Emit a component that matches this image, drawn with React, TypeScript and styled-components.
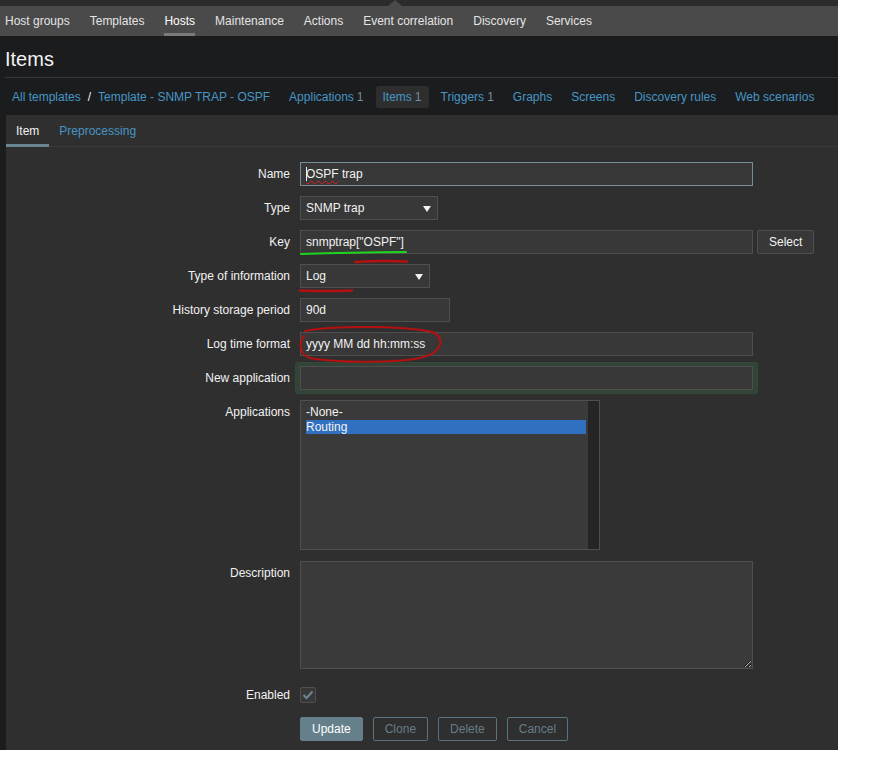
import React from 'react';
import styled, { createGlobalStyle, css } from 'styled-components';

const GlobalStyle = createGlobalStyle`
  html, body {
    margin: 0;
    padding: 0;
    background: #ffffff;
  }
  * {
    box-sizing: border-box;
  }
`;

const Page = styled.div`
  position: relative;
  width: 838px;
  height: 750px;
  background: #1b1c1e;
  font-family: 'Liberation Sans', Arial, sans-serif;
  font-size: 12px;
  color: #f2f2f2;
  display: flex;
  flex-direction: column;
  overflow: hidden;
`;

const TopStrip = styled.div`
  position: relative;
  height: 6px;
  background: #2b2b2b;

  &::after {
    content: '';
    position: absolute;
    left: 388px;
    bottom: 0;
    border-left: 7px solid transparent;
    border-right: 7px solid transparent;
    border-bottom: 6px solid #4a4a4a;
  }
`;

const NavBar = styled.nav`
  display: flex;
  gap: 20px;
  height: 30px;
  padding-left: 5px;
  background: #4a4a4a;
`;

const NavItem = styled.div<{ $active?: boolean }>`
  display: flex;
  align-items: center;
  height: 30px;
  padding-top: 3px;
  color: ${p => (p.$active ? '#ffffff' : '#e4e4e4')};
  border-bottom: 3px solid ${p => (p.$active ? '#7a7a7a' : 'transparent')};
`;

const TitleBar = styled.div`
  display: flex;
  align-items: center;
  height: 42px;
  margin-left: 5px;
  padding-top: 5px;
  border-bottom: 1px solid #383838;
  font-size: 20px;
  color: #f2f2f2;
`;

const Breadcrumbs = styled.div`
  display: flex;
  align-items: center;
  gap: 5px;
  height: 37px;
  padding-left: 5px;
`;

const Crumb = styled.div<{ $current?: boolean }>`
  display: flex;
  align-items: center;
  height: 22px;
  padding: 0 7px;
  gap: 7px;
  color: #4796c4;
  border-radius: 2px;
  ${p =>
    p.$current &&
    css`
      background: #2e2e2e;
    `}

  .sep {
    color: #f2f2f2;
  }

  .count {
    color: #768d99;
    margin-left: 3px;
  }
`;

const Panel = styled.div`
  flex: 1;
  margin-left: 6px;
  background: #2f2f2f;
  display: flex;
  flex-direction: column;
`;

const TabList = styled.div`
  display: flex;
  height: 32px;
  border-bottom: 1px solid #3a3a3a;
`;

const Tab = styled.div<{ $active?: boolean }>`
  padding: 0 10px;
  line-height: 32px;
  height: 32px;
  color: ${p => (p.$active ? '#f2f2f2' : '#4796c4')};
  box-shadow: ${p => (p.$active ? 'inset 0 -3px 0 #6b8693' : 'none')};
`;

const Form = styled.div`
  display: flex;
  flex-direction: column;
  gap: 10px;
  padding-top: 15px;
`;

const Row = styled.div<{ $top?: boolean; $gapAbove?: number }>`
  display: flex;
  align-items: ${p => (p.$top ? 'flex-start' : 'center')};
  gap: 10px;
  margin-top: ${p => p.$gapAbove ?? 0}px;
`;

const Label = styled.div<{ $top?: boolean }>`
  width: 284px;
  text-align: right;
  line-height: ${p => (p.$top ? '24px' : 'normal')};
  color: #f2f2f2;
`;

const Field = styled.div<{ $w: number; $focused?: boolean }>`
  position: relative;
  display: flex;
  align-items: center;
  width: ${p => p.$w}px;
  height: 24px;
  padding: 0 5px;
  background: #383838;
  border: 1px solid ${p => (p.$focused ? '#768d99' : '#4f4f4f')};
  color: #f2f2f2;
  white-space: pre;
`;

const Caret = styled.span`
  display: inline-block;
  width: 1px;
  height: 14px;
  background: #f2f2f2;
  margin-right: -1px;
`;

const Misspelled = styled.span`
  text-decoration: underline wavy #e02020;
  text-decoration-thickness: 1px;
  text-underline-offset: 2px;
`;

const SelectArrow = styled.svg`
  position: absolute;
  right: 6px;
  top: 9px;
`;

const Button = styled.div<{ $primary?: boolean; $dim?: boolean }>`
  display: flex;
  align-items: center;
  height: 24px;
  padding: 0 11px;
  border-radius: 2px;
  border: 1px solid ${p => (p.$primary ? '#677f8b' : p.$dim ? '#5a7380' : '#4f4f4f')};
  background: ${p => (p.$primary ? '#657f8b' : p.$dim ? 'transparent' : '#383838')};
  color: ${p => (p.$primary ? '#ffffff' : p.$dim ? '#667d88' : '#f2f2f2')};
`;

const Inline = styled.div`
  display: flex;
  gap: 4px;
`;

const Highlight = styled.div`
  margin: -4px -5px;
  padding: 3px 4px;
  background: #324337;
  border: 1px solid #34473a;
  border-radius: 2px;
`;

const ListBox = styled.div`
  display: flex;
  width: 300px;
  height: 150px;
  background: #3a3a3a;
  border: 1px solid #4f4f4f;
`;

const ListOptions = styled.div`
  flex: 1;
  padding: 4px 2px 4px 5px;
`;

const Option = styled.div<{ $selected?: boolean }>`
  line-height: 14px;
  height: 14px;
  color: #f2f2f2;
  background: ${p => (p.$selected ? '#2f70c0' : 'transparent')};
  margin-top: ${p => (p.$selected ? '1px' : '0')};
`;

const ScrollTrack = styled.div`
  width: 11px;
  background: #252525;
`;

const TextArea = styled.textarea`
  width: 453px;
  height: 108px;
  margin: 0;
  padding: 4px 5px;
  background: #3a3a3a;
  border: 1px solid #4f4f4f;
  color: #f2f2f2;
  font: inherit;
  outline: none;
`;

const CheckBox = styled.div`
  display: flex;
  align-items: center;
  justify-content: center;
  width: 16px;
  height: 16px;
  border: 1px solid #4f4f4f;
  border-radius: 2px;
  background: #383838;
`;

const ButtonBar = styled.div`
  display: flex;
  gap: 10px;
  padding-left: 294px;
  margin-top: 4px;
`;

const Annotations = styled.svg`
  position: absolute;
  left: 0;
  top: 0;
  pointer-events: none;
`;

const navItems = ['Host groups', 'Templates', 'Hosts', 'Maintenance', 'Actions', 'Event correlation', 'Discovery', 'Services'];

const crumbs: { label: string; count?: string; current?: boolean }[] = [
  { label: 'Applications', count: '1' },
  { label: 'Items', count: '1', current: true },
  { label: 'Triggers', count: '1' },
  { label: 'Graphs' },
  { label: 'Screens' },
  { label: 'Discovery rules' },
  { label: 'Web scenarios' },
];

const Arrow = () => (
  <SelectArrow width="8" height="6" viewBox="0 0 8 6">
    <path d="M0 0 H8 L4 6 Z" fill="#f2f2f2" />
  </SelectArrow>
);

export default function App() {
  return (
    <>
      <GlobalStyle />
      <Page>
        <TopStrip />
        <NavBar>
          {navItems.map(n => (
            <NavItem key={n} $active={n === 'Hosts'}>
              {n}
            </NavItem>
          ))}
        </NavBar>
        <TitleBar>Items</TitleBar>
        <Breadcrumbs>
          <Crumb>
            <span>All templates</span>
            <span className="sep">/</span>
            <span>Template - SNMP TRAP - OSPF</span>
          </Crumb>
          {crumbs.map(c => (
            <Crumb key={c.label} $current={c.current}>
              <span>
                {c.label}
                {c.count && <span className="count">{c.count}</span>}
              </span>
            </Crumb>
          ))}
        </Breadcrumbs>

        <Panel>
          <TabList>
            <Tab $active>Item</Tab>
            <Tab>Preprocessing</Tab>
          </TabList>

          <Form>
            <Row>
              <Label>Name</Label>
              <Field $w={453} $focused>
                <Caret />
                <Misspelled>OSPF</Misspelled> trap
              </Field>
            </Row>
            <Row>
              <Label>Type</Label>
              <Field $w={138}>
                SNMP trap
                <Arrow />
              </Field>
            </Row>
            <Row>
              <Label>Key</Label>
              <Inline>
                <Field $w={453}>snmptrap["OSPF"]</Field>
                <Button>Select</Button>
              </Inline>
            </Row>
            <Row>
              <Label>Type of information</Label>
              <Field $w={130}>
                Log
                <Arrow />
              </Field>
            </Row>
            <Row>
              <Label>History storage period</Label>
              <Field $w={150}>90d</Field>
            </Row>
            <Row>
              <Label>Log time format</Label>
              <Field $w={453}>yyyy MM dd hh:mm:ss</Field>
            </Row>
            <Row>
              <Label>New application</Label>
              <Highlight>
                <Field $w={453} />
              </Highlight>
            </Row>
            <Row $top>
              <Label $top>Applications</Label>
              <ListBox>
                <ListOptions>
                  <Option>-None-</Option>
                  <Option $selected>Routing</Option>
                </ListOptions>
                <ScrollTrack />
              </ListBox>
            </Row>
            <Row $top $gapAbove={1}>
              <Label $top>Description</Label>
              <TextArea readOnly defaultValue="" />
            </Row>
            <Row $gapAbove={8}>
              <Label>Enabled</Label>
              <CheckBox>
                <svg width="12" height="10" viewBox="0 0 12 10">
                  <path d="M1.5 5 L4.5 8 L10.5 1.5" fill="none" stroke="#6f8590" strokeWidth="2" />
                </svg>
              </CheckBox>
            </Row>
            <ButtonBar>
              <Button $primary>Update</Button>
              <Button $dim>Clone</Button>
              <Button $dim>Delete</Button>
              <Button $dim>Cancel</Button>
            </ButtonBar>
          </Form>
        </Panel>

        <Annotations width="838" height="750" viewBox="0 0 838 750">
          <path d="M301 254 Q350 252.5 406 252" fill="none" stroke="#1fd41f" strokeWidth="2" strokeLinecap="round" />
          <path d="M355 262 Q380 260.5 407 261.5" fill="none" stroke="#b51010" strokeWidth="2.5" strokeLinecap="round" />
          <path d="M300 290.5 Q325 291.5 352 290.5" fill="none" stroke="#b51010" strokeWidth="2.5" strokeLinecap="round" />
          <path
            d="M305 331 C330 326 400 325 432 332 C446 337 443 353 420 358 C390 364 330 362 310 358 C300 355 298 343 304 336"
            fill="none"
            stroke="#b51010"
            strokeWidth="2"
            strokeLinecap="round"
          />
        </Annotations>
      </Page>
    </>
  );
}
